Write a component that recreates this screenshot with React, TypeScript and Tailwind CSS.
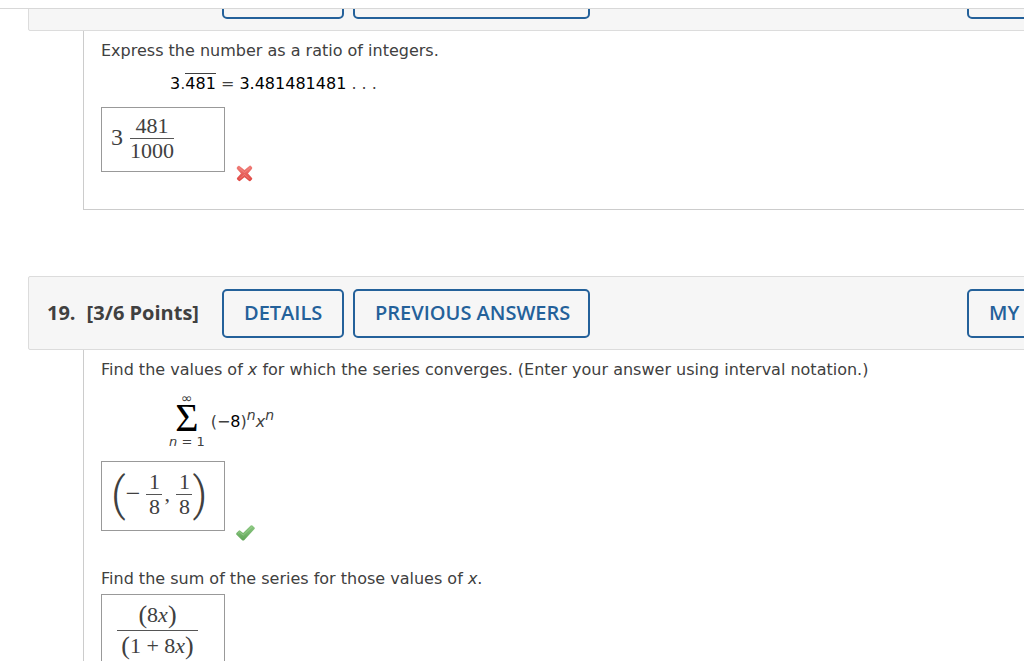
import type { ReactNode } from "react"

const outlineButton =
  "h-[49px] shrink-0 rounded-[5px] border-2 border-[#24619a] px-5 text-[20px] leading-[26px] font-semibold whitespace-nowrap text-[#24619a]"

function QuestionHeader({ number, points }: { number: string; points: string }) {
  return (
    <header className="flex h-[74px] items-center rounded-l-[2px] border border-[#dcdcdc] bg-[#f6f6f6] pl-[18px] font-['Open_Sans',sans-serif]">
      <h2 className="flex w-[175px] shrink-0 gap-[11px] text-[20px] leading-[26px] font-bold whitespace-nowrap text-[#404040]">
        <span>{number}</span>
        <span>{points}</span>
      </h2>
      <div className="flex flex-1 gap-[9px]">
        <button type="button" className={`${outlineButton} w-[122px]`}>DETAILS</button>
        <button type="button" className={`${outlineButton} w-[237px]`}>PREVIOUS ANSWERS</button>
      </div>
      <button type="button" className={`${outlineButton} w-[74px] text-left`}>MY</button>
    </header>
  )
}

function Fraction({ top, bottom, className = "" }: { top: ReactNode; bottom: ReactNode; className?: string }) {
  return (
    <span className={`inline-flex flex-col items-center text-[22px] leading-6 ${className}`}>
      <span className="flex items-center">{top}</span>
      <span className="flex items-center justify-center self-stretch border-t border-[#555]">{bottom}</span>
    </span>
  )
}

// parenthesis that is slightly taller than the term it wraps
function Paren({ children }: { children: string }) {
  return <span className="text-[26px] leading-[30px]">{children}</span>
}

// parenthesis that spans a whole fraction
function TallParen({ children }: { children: string }) {
  return (
    <span className="font-['Roboto',sans-serif] text-[46px] leading-[52px] font-light">
      {children}
    </span>
  )
}

function AnswerBox({ children, mark, className }: { children: ReactNode; mark?: ReactNode; className: string }) {
  return (
    <div className="flex items-end gap-[11px]">
      <div className={`flex w-[124px] border border-[#999] font-['Liberation_Serif',serif] text-[#404040] ${className}`}>
        {children}
      </div>
      {mark}
    </div>
  )
}

function WrongMark() {
  return (
    <svg viewBox="0 0 17 17" className="-mb-[10px] h-[17px] w-[17px]" role="img" aria-label="Incorrect">
      <defs>
        <linearGradient id="wrong" x1="0" y1="0" x2="0" y2="1">
          <stop offset="0" stopColor="#f07f7a" />
          <stop offset="1" stopColor="#df4642" />
        </linearGradient>
      </defs>
      <path
        d="M3.2.8 8.5 4.9 13.6.8Q14.4.3 15.2 1.2L16 2.2Q16.7 3.1 15.9 3.9L12 8.4 16 12.9Q16.7 13.7 15.9 14.5L14.4 15.9Q13.6 16.6 12.8 15.8L8.5 12.2 4.2 15.8Q3.4 16.6 2.6 15.8L1.2 14.4Q.4 13.6 1.2 12.8L5 8.4 1 3.9Q.3 3.1 1 2.3L1.8 1.3Q2.5.3 3.2.8Z"
        fill="url(#wrong)"
      />
      <path d="M3 2.9 8.5 7.5 14 2.9M3.3 14 8.5 9.5 13.7 14" fill="none" stroke="#f59a94" strokeWidth="1" opacity=".5" />
    </svg>
  )
}

function RightMark() {
  return (
    <svg viewBox="0 0 19 16" className="-mb-[10px] h-4 w-[19px]" role="img" aria-label="Correct">
      <defs>
        <linearGradient id="right" x1="0" y1="0" x2="0" y2="1">
          <stop offset="0" stopColor="#8cc882" />
          <stop offset="1" stopColor="#61a558" />
        </linearGradient>
      </defs>
      <path
        d="M.4 8.1 2.7 5.7Q3.5 5 4.3 5.7L7.1 8.1 14.7.6Q15.6-.1 16.4.6L18.5 2.5Q19.1 3.2 18.5 4L8.4 14.9Q7.2 16 5.9 14.9L.5 9.8Q-.1 9 .4 8.1Z"
        fill="url(#right)"
      />
      <path d="M2.2 8.4 3.6 7.1 7.2 10.1 15.9 2" fill="none" stroke="#a5d59a" strokeWidth="1" opacity=".6" />
    </svg>
  )
}

export default function App() {
  return (
    <div className="flex h-screen flex-col overflow-hidden bg-white font-['DejaVu_Sans',sans-serif] text-[16px] leading-5 text-[#404040]">
      <div className="h-[9px] shrink-0 border-b border-[#d8d8d8]" />
      <main className="min-h-0 flex-1 overflow-hidden">
        <div className="-mt-[52px] -mr-[18px] ml-7">
          <section>
            <QuestionHeader number="18." points="[0/3 Points]" />
            <div className="ml-[55px] flex h-[179px] flex-col border-b border-l border-[#ccc] pt-[10px] pl-[17px]">
              <p>Express the number as a ratio of integers.</p>
              <p className="mt-[13px] mb-[13px] pl-[69px]">
                <span className="text-black">3</span>.
                <span className="border-t border-[#404040] text-black">481</span> ={" "}
                <span className="text-black">3.481481481</span> . . .
              </p>
              <AnswerBox className="h-[65px] items-start gap-[7px] pt-[6px] pl-[9px]" mark={<WrongMark />}>
                <span className="text-[24px] leading-[46px]">3</span>
                <Fraction top="481" bottom="1000" />
              </AnswerBox>
            </div>
          </section>

          <section className="mt-[66px]">
            <QuestionHeader number="19." points="[3/6 Points]" />
            <div className="ml-[55px] border-l border-[#ccc] pt-[10px] pl-[17px]">
              <p>
                Find the values of <i>x</i> for which the series converges. (Enter your answer using interval notation.)
              </p>
              <div className="mt-3 mb-[13px] flex items-center gap-[6px] pl-[68px]">
                <div className="flex flex-col items-center leading-3">
                  <span className="text-[14px]">∞</span>
                  <span className="h-8 font-['Liberation_Serif',serif] text-[40px] leading-7 text-black">Σ</span>
                  <span className="text-[13px]"><i>n</i> = 1</span>
                </div>
                <div className="pt-1">
                  (−<span className="text-black">8</span>)<sup className="text-[14px]"><i>n</i></sup>
                  <i>x</i><sup className="text-[14px]"><i>n</i></sup>
                </div>
              </div>
              <AnswerBox className="h-[70px] items-center pb-1 pl-[9px]" mark={<RightMark />}>
                <TallParen>(</TallParen>
                <span className="text-[26px]">−</span>
                <Fraction top="1" bottom="8" className="ml-[6px] w-4" />
                <span className="w-[14px] pl-[2px] text-[22px]">,</span>
                <Fraction top="1" bottom="8" className="w-4" />
                <TallParen>)</TallParen>
              </AnswerBox>
              <p className="mt-[38px] mb-[5px]">
                Find the sum of the series for those values of <i>x</i>.
              </p>
              <AnswerBox className="h-[75px] pt-[5px] pl-[15px]">
                <Fraction
                  className="w-[81px]"
                  top={<><Paren>(</Paren><span>8<i>x</i></span><Paren>)</Paren></>}
                  bottom={<><Paren>(</Paren><span>1 + 8<i>x</i></span><Paren>)</Paren></>}
                />
              </AnswerBox>
            </div>
          </section>
        </div>
      </main>
    </div>
  )
}
